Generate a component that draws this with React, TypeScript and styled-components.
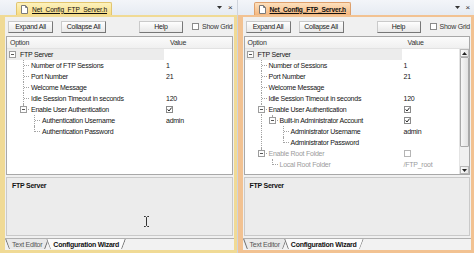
import React from 'react';
import styled, { createGlobalStyle } from 'styled-components';

const GlobalStyle = createGlobalStyle`
  html, body { margin: 0; padding: 0; }
  body {
    width: 474px;
    height: 253px;
    overflow: hidden;
    background: #cfd4dc;
    font-family: "Liberation Sans", Arial, sans-serif;
    font-size: 7px;
    letter-spacing: -0.25px;
    color: #141414;
  }
`;

type Accent = { frame: string; tabTop: string; tabBottom: string; tabEdge: string };

const accents: Record<'yellow' | 'orange', Accent> = {
  yellow: { frame: '#f0da95', tabTop: '#fdf2bd', tabBottom: '#f7dc84', tabEdge: '#e2c56e' },
  orange: { frame: '#f2c292', tabTop: '#fde0bd', tabBottom: '#f4b67e', tabEdge: '#dea06c' },
};

type TreeNode = {
  label: string;
  value?: string;
  check?: boolean;
  disabled?: boolean;
  selected?: boolean;
  children?: TreeNode[];
};

type FlatRow = TreeNode & { level: number; last: boolean; trail: boolean[] };

const flatten = (nodes: TreeNode[], level: number, trail: boolean[]): FlatRow[] =>
  nodes.flatMap((n, i) => {
    const last = i === nodes.length - 1;
    const row: FlatRow = { ...n, level, last, trail };
    return [row, ...(n.children ? flatten(n.children, level + 1, [...trail, !last]) : [])];
  });

const Page = styled.div`
  display: flex;
  gap: 1px;
  height: 253px;
`;

const Panel = styled.div`
  flex: 1;
  min-width: 0;
  display: flex;
  flex-direction: column;
`;

const TitleStrip = styled.div`
  height: 15px;
  display: flex;
  align-items: flex-end;
  padding: 0 4px 0 16px;
  background: linear-gradient(#f3f5f9, #e6ebf2);
`;

const DocTab = styled.div<{ $accent: Accent; $active?: boolean }>`
  height: 12px;
  display: flex;
  align-items: center;
  gap: 4px;
  padding: 0 4px;
  border: 1px solid ${p => p.$accent.tabEdge};
  border-bottom: none;
  border-radius: 2px 2px 0 0;
  background: linear-gradient(${p => p.$accent.tabTop}, ${p => p.$accent.tabBottom});
  font-size: 6.6px;
  font-weight: ${p => (p.$active ? 700 : 400)};
  letter-spacing: ${p => (p.$active ? '-0.2px' : '-0.1px')};
  color: #111;

  span {
    text-decoration: underline;
  }
`;

const StripControls = styled.div`
  margin-left: auto;
  align-self: center;
  display: flex;
  align-items: center;
  gap: 6px;
  color: #333;
  font-size: 8px;
  line-height: 8px;
`;

const Frame = styled.div<{ $accent: Accent }>`
  flex: 1;
  display: flex;
  flex-direction: column;
  background: #f0f0f0;
  border-style: solid;
  border-color: ${p => p.$accent.frame};
  border-width: 2px 3px 3px 5px;
`;

const Toolbar = styled.div`
  height: 19px;
  display: flex;
  align-items: center;
  padding-left: 3px;
`;

const ToolButton = styled.button<{ $w: number; $gap?: number }>`
  width: ${p => p.$w}px;
  height: 12px;
  margin-left: ${p => p.$gap ?? 0}px;
  padding: 0;
  font: inherit;
  letter-spacing: inherit;
  color: #222;
  background: linear-gradient(#fefefe, #e8e8e8);
  border: 1px solid #cacaca;
  border-right-color: #777;
  border-bottom-color: #777;
`;

const GridCheck = styled.label`
  display: flex;
  align-items: center;
  gap: 3px;
  margin-left: 9px;
  color: #333;
  white-space: nowrap;
`;

const Box = styled.span<{ $disabled?: boolean }>`
  width: 5px;
  height: 5px;
  display: inline-flex;
  align-items: center;
  justify-content: center;
  background: #fff;
  border: 1px solid ${p => (p.$disabled ? '#b5b5b5' : '#8a8a8a')};
`;

const Grid = styled.div`
  height: 139px;
  margin: 0 1px;
  box-sizing: border-box;
  display: flex;
  flex-direction: column;
  background: #fff;
  border: 1px solid #a8a8a8;
`;

const HeaderRow = styled.div`
  height: 12px;
  flex: none;
  display: flex;
  align-items: center;
  background: linear-gradient(#fbfbfb, #f0f0f0);
  border-bottom: 1px solid #e2e2e2;
  box-sizing: border-box;
  color: #333;
`;

const HeaderCell = styled.div<{ $w?: number }>`
  width: ${p => (p.$w ? `${p.$w}px` : 'auto')};
  flex: ${p => (p.$w ? 'none' : 1)};
  padding-left: 3px;
`;

const GridBody = styled.div`
  flex: 1;
  display: flex;
  min-height: 0;
  overflow: hidden;
`;

const Rows = styled.div`
  flex: 1;
  min-width: 0;
`;

const Row = styled.div<{ $disabled?: boolean }>`
  height: 11px;
  display: flex;
  align-items: center;
  color: ${p => (p.$disabled ? '#9b9b9b' : '#141414')};
`;

const OptionCell = styled.div<{ $selected?: boolean }>`
  width: 157px;
  flex: none;
  height: 11px;
  display: flex;
  align-items: center;
  background: ${p => (p.$selected ? '#ececec' : 'transparent')};
  white-space: nowrap;
  overflow: hidden;
`;

const ValueCell = styled.div`
  flex: 1;
  padding-left: 2px;
  display: flex;
  align-items: center;
  white-space: nowrap;
`;

const Guide = styled.div<{ $v: 'none' | 'full' | 'half'; $h?: boolean }>`
  position: relative;
  width: 11px;
  height: 11px;
  flex: none;
  display: flex;
  align-items: center;
  justify-content: center;

  &::before {
    content: '';
    display: ${p => (p.$v === 'none' ? 'none' : 'block')};
    position: absolute;
    left: 5px;
    top: 0;
    height: ${p => (p.$v === 'half' ? '6px' : '11px')};
    border-left: 1px dotted #a3a3a3;
  }

  &::after {
    content: '';
    display: ${p => (p.$h ? 'block' : 'none')};
    position: absolute;
    left: 6px;
    top: 5px;
    width: 5px;
    border-top: 1px dotted #a3a3a3;
  }
`;

const Expander = styled.span`
  position: relative;
  z-index: 1;
  width: 5px;
  height: 5px;
  display: flex;
  align-items: center;
  justify-content: center;
  background: #fdfdfd;
  border: 1px solid #9c9c9c;

  &::after {
    content: '';
    width: 3px;
    border-top: 1px solid #555;
  }
`;

const Label = styled.span`
  padding-left: 2px;
`;

const Scrollbar = styled.div`
  width: 9px;
  flex: none;
  display: flex;
  flex-direction: column;
  background: #f0f0f0;
  border-left: 1px solid #e4e4e4;
`;

const ScrollButton = styled.div`
  height: 8px;
  flex: none;
  display: flex;
  align-items: center;
  justify-content: center;
  background: linear-gradient(90deg, #fbfbfb, #e6e6e6);
  border: 1px solid #b8b8b8;
  box-sizing: border-box;
`;

const Thumb = styled.div`
  height: 90px;
  flex: none;
  background: linear-gradient(90deg, #f7f7f7, #e2e2e2);
  border: 1px solid #a9a9a9;
  border-radius: 1px;
  box-sizing: border-box;
`;

const ScrollTrack = styled.div`
  flex: 1;
`;

const Description = styled.div`
  position: relative;
  height: 59px;
  margin: 2px 1px 0;
  box-sizing: border-box;
  padding: 4px 5px;
  background: #ececec;
  border: 1px solid #c9c9c9;
  font-weight: 700;
  color: #111;
`;

const Cursor = styled.svg`
  position: absolute;
  left: 137px;
  top: 38px;
`;

const SheetBar = styled.div`
  height: 12px;
  margin-top: 2px;
  display: flex;
  align-items: flex-start;
  background: #f2f2f2;
  border-top: 1px solid #b0b0b0;
  box-sizing: border-box;
`;

const SheetTab = styled.div<{ $active?: boolean }>`
  position: relative;
  height: 10px;
  padding: 0 7px;
  display: flex;
  align-items: center;
  margin-left: ${p => (p.$active ? '-3px' : '0')};
  z-index: ${p => (p.$active ? 1 : 0)};
  font-weight: ${p => (p.$active ? 700 : 400)};
  color: ${p => (p.$active ? '#111' : '#555')};
  background: ${p => (p.$active ? '#fcfcfc' : '#e9e9e9')};
  clip-path: polygon(0 0, 100% 0, calc(100% - 4px) 100%, 4px 100%);

  &::before,
  &::after {
    content: '';
    position: absolute;
    top: 0;
    height: 10px;
    width: 1px;
    background: #6f6f6f;
  }
  &::before {
    left: 2px;
    transform: skewX(20deg);
  }
  &::after {
    right: 2px;
    transform: skewX(-20deg);
  }
`;

const DocIcon = () => (
  <svg width="7" height="9" viewBox="0 0 7 9">
    <path d="M0.5 0.5h4l2 2v6h-6z" fill="#fff" stroke="#7a7a7a" />
    <path d="M4.5 0.5v2h2" fill="none" stroke="#7a7a7a" />
  </svg>
);

const CheckMark = () => (
  <svg width="5" height="5" viewBox="0 0 5 5">
    <path d="M0.6 2.4l1.4 1.6 2.6-3.4" fill="none" stroke="#222" strokeWidth="1" />
  </svg>
);

const TreeRow: React.FC<{ row: FlatRow }> = ({ row }) => {
  const guides: React.ReactNode[] = [];
  for (let k = 0; k <= row.level; k++) {
    if (k === row.level) {
      const v = row.level === 0 ? 'none' : row.last ? 'half' : 'full';
      guides.push(
        <Guide key={k} $v={v} $h={row.level > 0}>
          {row.children && <Expander />}
        </Guide>
      );
    } else {
      guides.push(<Guide key={k} $v={k > 0 && row.trail[k] ? 'full' : 'none'} />);
    }
  }
  return (
    <Row $disabled={row.disabled}>
      <OptionCell $selected={row.selected}>
        {guides}
        <Label>{row.label}</Label>
      </OptionCell>
      <ValueCell>
        {row.check !== undefined ? (
          <Box $disabled={row.disabled}>{row.check && <CheckMark />}</Box>
        ) : (
          row.value
        )}
      </ValueCell>
    </Row>
  );
};

type ConfigPanelProps = {
  accent: Accent;
  active?: boolean;
  tree: TreeNode[];
  scrollbar?: boolean;
  cursor?: boolean;
};

const ConfigPanel: React.FC<ConfigPanelProps> = ({ accent, active, tree, scrollbar, cursor }) => {
  const rows = flatten(tree, 0, []);
  return (
    <Panel>
      <TitleStrip>
        <DocTab $accent={accent} $active={active}>
          <DocIcon />
          <span>Net_Config_FTP_Server.h</span>
        </DocTab>
        <StripControls>
          <svg width="5" height="3" viewBox="0 0 5 3">
            <path d="M0 0h5L2.5 3z" fill="#333" />
          </svg>
          <span>×</span>
        </StripControls>
      </TitleStrip>
      <Frame $accent={accent}>
        <Toolbar>
          <ToolButton $w={45}>Expand All</ToolButton>
          <ToolButton $w={45} $gap={8}>Collapse All</ToolButton>
          <ToolButton $w={44} $gap={33}>Help</ToolButton>
          <GridCheck>
            <Box />
            Show Grid
          </GridCheck>
        </Toolbar>
        <Grid>
          <HeaderRow>
            <HeaderCell $w={157}>Option</HeaderCell>
            <HeaderCell>Value</HeaderCell>
          </HeaderRow>
          <GridBody>
            <Rows>
              {rows.map((r, i) => (
                <TreeRow key={i} row={r} />
              ))}
            </Rows>
            {scrollbar && (
              <Scrollbar>
                <ScrollButton>
                  <svg width="5" height="3" viewBox="0 0 5 3">
                    <path d="M0 3h5L2.5 0z" fill="#222" />
                  </svg>
                </ScrollButton>
                <Thumb />
                <ScrollTrack />
                <ScrollButton>
                  <svg width="5" height="3" viewBox="0 0 5 3">
                    <path d="M0 0h5L2.5 3z" fill="#222" />
                  </svg>
                </ScrollButton>
              </Scrollbar>
            )}
          </GridBody>
        </Grid>
        <Description>
          FTP Server
          {cursor && (
            <Cursor width="5" height="11" viewBox="0 0 5 11">
              <path d="M0 0.5h1.5l1 1 1-1H5M2.5 1.5v8M0 10.5h1.5l1-1 1 1H5" fill="none" stroke="#333" strokeWidth="1" />
            </Cursor>
          )}
        </Description>
        <SheetBar>
          <SheetTab>Text Editor</SheetTab>
          <SheetTab $active>Configuration Wizard</SheetTab>
        </SheetBar>
      </Frame>
    </Panel>
  );
};

const leftTree: TreeNode[] = [
  {
    label: 'FTP Server',
    selected: true,
    children: [
      { label: 'Number of FTP Sessions', value: '1' },
      { label: 'Port Number', value: '21' },
      { label: 'Welcome Message' },
      { label: 'Idle Session Timeout in seconds', value: '120' },
      {
        label: 'Enable User Authentication',
        check: true,
        children: [
          { label: 'Authentication Username', value: 'admin' },
          { label: 'Authentication Password' },
        ],
      },
    ],
  },
];

const rightTree: TreeNode[] = [
  {
    label: 'FTP Server',
    selected: true,
    children: [
      { label: 'Number of Sessions', value: '1' },
      { label: 'Port Number', value: '21' },
      { label: 'Welcome Message' },
      { label: 'Idle Session Timeout in seconds', value: '120' },
      {
        label: 'Enable User Authentication',
        check: true,
        children: [
          {
            label: 'Built-in Administrator Account',
            check: true,
            children: [
              { label: 'Administrator Username', value: 'admin' },
              { label: 'Administrator Password' },
            ],
          },
        ],
      },
      {
        label: 'Enable Root Folder',
        check: false,
        disabled: true,
        children: [{ label: 'Local Root Folder', value: '/FTP_root', disabled: true }],
      },
    ],
  },
];

export default function App() {
  return (
    <>
      <GlobalStyle />
      <Page>
        <ConfigPanel accent={accents.yellow} tree={leftTree} cursor />
        <ConfigPanel accent={accents.orange} tree={rightTree} active scrollbar />
      </Page>
    </>
  );
}
